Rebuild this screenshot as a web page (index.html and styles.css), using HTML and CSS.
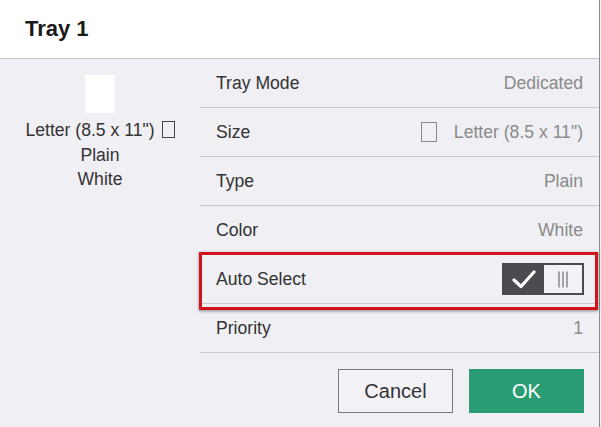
FILE: index.html
```html
<!DOCTYPE html>
<html>
<head>
<meta charset="utf-8">
<link rel="stylesheet" href="styles.css">
</head>
<body>
<div class="dialog">
  <div class="header">Tray 1</div>
  <div class="main">
    <div class="summary">
      <div class="paper"></div>
      <div class="sum-line">Letter (8.5 x 11")<span class="tofu"></span></div>
      <div class="sum-line">Plain</div>
      <div class="sum-line">White</div>
    </div>
    <div class="settings">
      <div class="row"><span class="label">Tray Mode</span><span class="value">Dedicated</span></div>
      <div class="row"><span class="label">Size</span><span class="value"><span class="size-icon"></span>Letter (8.5 x 11")</span></div>
      <div class="row"><span class="label">Type</span><span class="value">Plain</span></div>
      <div class="row"><span class="label">Color</span><span class="value">White</span></div>
      <div class="row row-toggle">
        <span class="label">Auto Select</span>
        <div class="toggle">
          <div class="toggle-on">
            <svg width="24" height="20" viewBox="0 0 24 20"><path d="M2 11 L9 17.5 L22 3" fill="none" stroke="#fff" stroke-width="3.2" stroke-linecap="round" stroke-linejoin="round"/></svg>
          </div>
          <div class="toggle-off">
            <svg width="12" height="17" viewBox="0 0 12 17"><path d="M2 0.5 V16.5 M6 0.5 V16.5 M10 0.5 V16.5" stroke="#555" stroke-width="1"/></svg>
          </div>
        </div>
        <div class="highlight"></div>
      </div>
      <div class="row"><span class="label">Priority</span><span class="value">1</span></div>
      <div class="footer">
        <button class="btn btn-cancel">Cancel</button>
        <button class="btn btn-ok">OK</button>
      </div>
    </div>
  </div>
</div>
</body>
</html>
```
FILE: styles.css
```css
html, body {
  margin: 0;
  padding: 0;
  background: #efeff4;
}
.dialog {
  width: 599px;
  height: 427px;
  border-right: 1px solid #8c8c8c;
  background: #efeff4;
  display: flex;
  flex-direction: column;
  font-family: "Liberation Sans", Arial, sans-serif;
  color: #333;
}
.header {
  height: 58px;
  flex: none;
  background: #fff;
  border-bottom: 1px solid #c8c8cc;
  padding-left: 25px;
  display: flex;
  align-items: center;
  font-size: 22px;
  font-weight: bold;
  color: #1a1a1a;
}
.main {
  flex: 1;
  display: flex;
}
.summary {
  width: 200px;
  flex: none;
  padding-top: 16px;
  display: flex;
  flex-direction: column;
  align-items: center;
  font-size: 17.6px;
  color: #333;
}
.paper {
  width: 30px;
  height: 38px;
  background: #fff;
  margin-bottom: 5px;
}
.sum-line {
  line-height: 24.5px;
  display: flex;
  align-items: center;
}
.tofu {
  display: inline-block;
  width: 11px;
  height: 15px;
  border: 1px solid #444;
  margin-left: 7px;
  margin-top: -2px;
}
.settings {
  flex: 1;
  display: flex;
  flex-direction: column;
}
.row {
  height: 48px;
  border-bottom: 1px solid #c8c8cc;
  display: flex;
  align-items: center;
  justify-content: space-between;
  padding: 0 16px;
  font-size: 17.6px;
}
.label {
  color: #333;
}
.value {
  color: #8a8a8a;
  display: flex;
  align-items: center;
}
.size-icon {
  display: inline-block;
  width: 14px;
  height: 18px;
  border: 1.5px solid #8a8a8a;
  margin-right: 17px;
}
.row-toggle {
  position: relative;
  padding-right: 15px;
}
.toggle {
  width: 78px;
  height: 28px;
  border: 2px solid #4a4a50;
  display: flex;
  background: #f2f2f6;
}
.toggle-on {
  width: 40px;
  background: #4a4a50;
  display: flex;
  align-items: center;
  justify-content: center;
}
.toggle-off {
  flex: 1;
  display: flex;
  align-items: center;
  justify-content: center;
}
.highlight {
  position: absolute;
  top: -3px;
  bottom: -7px;
  left: -1px;
  right: 1px;
  border: 3px solid #d1141c;
  box-shadow: 0 1px 3px rgba(0, 0, 0, 0.45);
  pointer-events: none;
}
.footer {
  display: flex;
  justify-content: flex-end;
  gap: 16px;
  padding: 16px 15px 0 0;
}
.btn {
  width: 115px;
  height: 44px;
  font-family: "Liberation Sans", Arial, sans-serif;
  font-size: 20px;
  padding: 0;
  cursor: pointer;
}
.btn-cancel {
  background: #f2f2f6;
  border: 1px solid #7a7a7a;
  color: #333;
}
.btn-ok {
  background: #2a9d74;
  border: none;
  color: #fff;
}
```
